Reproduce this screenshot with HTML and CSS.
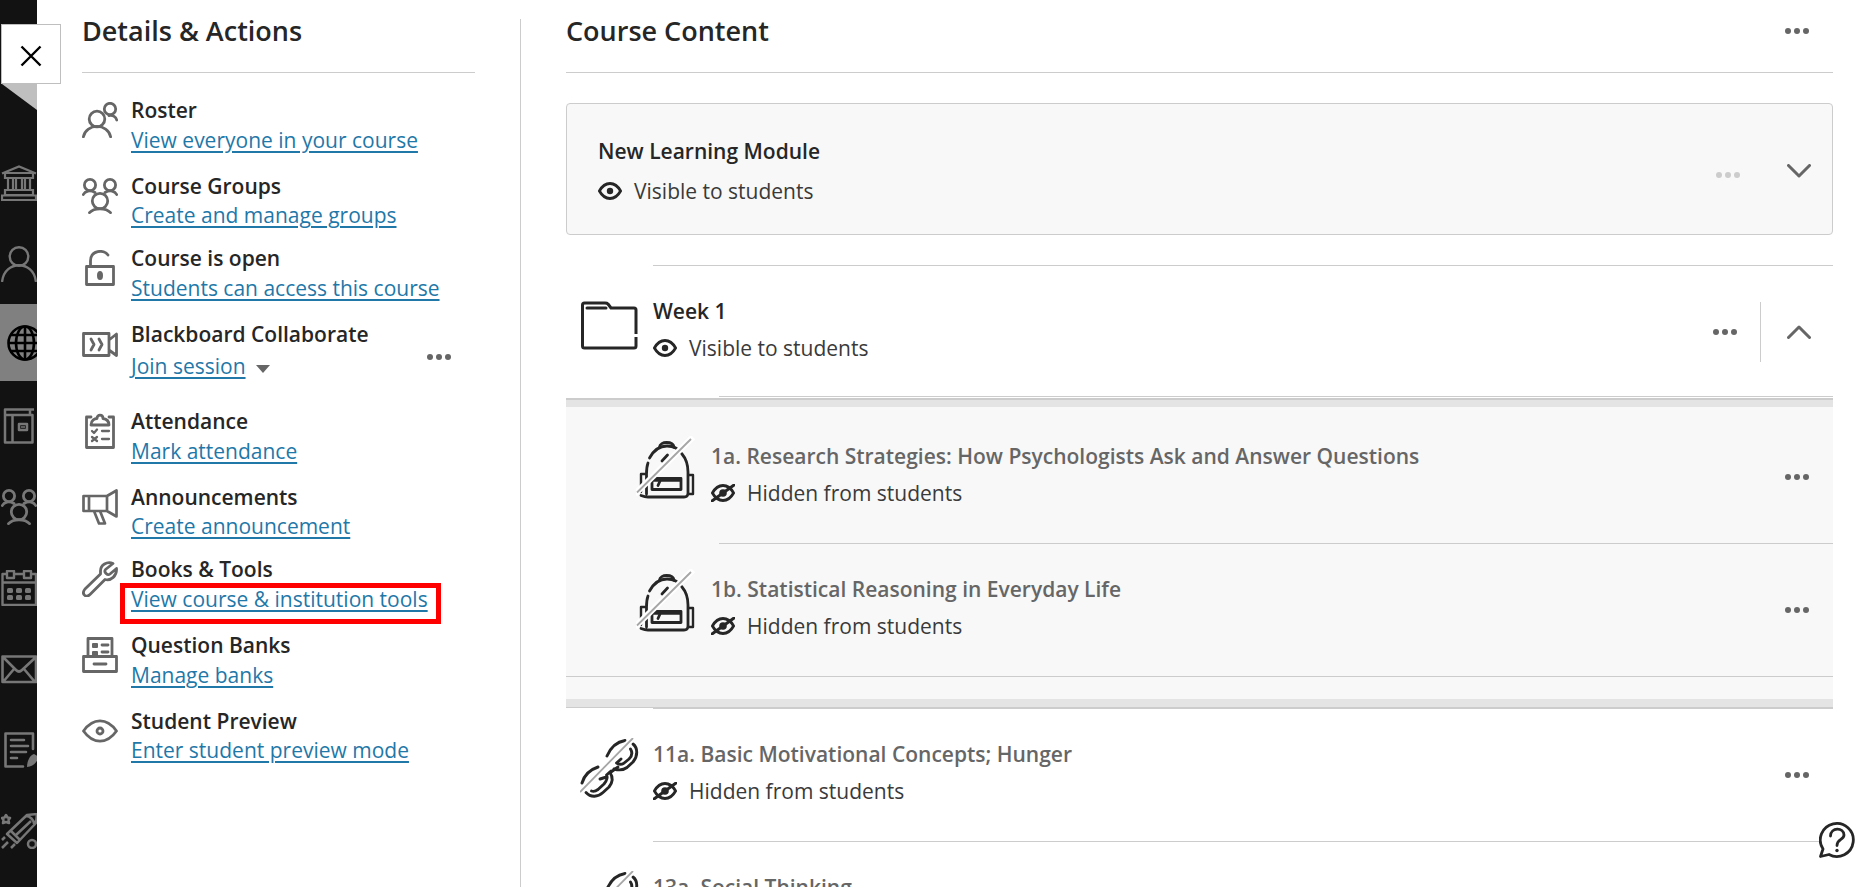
FILE: index.html
```
<!DOCTYPE html>
<html lang="en">
<head>
<meta charset="utf-8">
<title>Course Content</title>
<link rel="stylesheet" href="styles.css">
</head>
<body>
<svg class="sprite" aria-hidden="true">
  <symbol id="dots" viewBox="0 0 24 6"><g fill="currentColor"><circle cx="3" cy="3" r="3"/><circle cx="12" cy="3" r="3"/><circle cx="21" cy="3" r="3"/></g></symbol>
  <symbol id="eye" viewBox="0 0 24 18"><path d="M1.4 9C7-1 17-1 22.600 9C17 19 7 19 1.400 9Z" fill="none" stroke="currentColor" stroke-width="2.8" stroke-linejoin="round"/><circle cx="12" cy="9" r="3.200" fill="currentColor"/></symbol>
  <symbol id="eye-off" viewBox="0 0 24 18"><path d="M1.400 9C7-1 17-1 22.600 9C17 19 7 19 1.400 9Z" fill="none" stroke="currentColor" stroke-width="2.800"/><circle cx="12" cy="9" r="3.800" fill="currentColor"/><path d="M1 17L23 1" stroke="currentColor" stroke-width="3" stroke-linecap="round"/></symbol>
  <symbol id="groups" viewBox="0 0 36 36"><g fill="none" stroke="currentColor" stroke-width="2.800" stroke-linecap="round"><circle cx="8" cy="7" r="5.600"/><circle cx="28" cy="7" r="5.600"/><circle cx="18" cy="23" r="7.700"/><path d="M1.300 16.500C3 13 8 11.500 13 14.500M34.700 16.500C33 13 28 11.500 23 14.500M7.500 34.700C12 29.500 24 29.500 28.500 34.700"/></g></symbol>
  <symbol id="chevron" viewBox="0 0 24 14"><path d="M1.500 1.500L12 12L22.500 1.500" fill="none" stroke="currentColor" stroke-width="3" stroke-linecap="round" stroke-linejoin="round"/></symbol>
  <symbol id="backpack" viewBox="0 0 60 66">
    <g fill="none" stroke="currentColor" stroke-width="2.800" stroke-linejoin="round" stroke-linecap="round">
      <path d="M10.500 58V38Q10.500 31 12 27M13.500 22Q20 10 31 10Q41 10 46 18Q52 25 52 36V57Q52 61 48 61H12Q9 61 5 59.500"/>
      <path d="M23.500 11C24 5 37 5 38 11"/>
      <path d="M9 38H5V56M53 39H57V58H53" stroke-width="2.400"/>
      <path d="M26 25L31.500 19"/>
      <path d="M16 42.500H45V53.500H16Z"/><path d="M17 44H44" stroke-width="3.500"/><path d="M24 45L22 49.500"/>
    </g>
    <path d="M-1 58L57 1" stroke="#fff" stroke-width="6"/><path d="M1 56.500L55 3" stroke="#a6a6a6" stroke-width="1.800"/>
  </symbol>
  <symbol id="chain" viewBox="0 0 60 62">
    <g fill="none" stroke="currentColor" stroke-width="2.900" stroke-linecap="round" stroke-linejoin="round">
      <path d="M27 18C30 11 36 4 45 2.500M2 45C4 38 9 32 18 29"/>
      <path d="M53 6C58 10 58 18 53 24L47 29.500C43 32.500 39 32.500 34 31"/>
      <path d="M50.500 11C53 15 52 18 49 21L43.500 25.500C41 27 39 26.500 36.500 25L41 21"/>
      <path d="M6 54.500C11 60 18 59 23 54.500L29 49C33 44 33 39 30 34.500"/>
      <path d="M11.500 53C14 54 16 53 18 51.500L24 46C27 42.500 28 40 26.500 37L31 33M26.500 39L20 41"/>
      <path d="M31 34L38 29"/>
    </g>
    <path d="M0 54L53 0" stroke="#fff" stroke-width="5.500"/><path d="M0 54L53 0" stroke="#a6a6a6" stroke-width="1.800"/>
  </symbol>
</svg>

<div class="app">
  <nav class="rail" aria-label="Main">
    <a class="rail-item" href="#" aria-label="Institution"><svg viewBox="0 0 36 36"><g fill="none" stroke="currentColor" stroke-width="2.200"><path d="M1 8.500L18 1.500L35 8.500M4 8H32V13H4Z M7 14V25M29 14V25M12 14V25M15 14V25M21 14V25M24 14V25M4 25H32V30H4ZM1 30.500H35V35H1Z"/></g></svg></a>
    <a class="rail-item" href="#" aria-label="Profile"><svg viewBox="0 0 36 36"><g fill="none" stroke="currentColor" stroke-width="2.400" stroke-linecap="round"><circle cx="18" cy="10.500" r="9.300"/><path d="M1.200 35C4 14 32 14 34.800 35"/></g></svg></a>
    <a class="rail-item rail-item--active" href="#" aria-label="Activity"><svg viewBox="0 0 36 36"><g fill="none" stroke="currentColor" stroke-width="2.600"><circle cx="18" cy="18" r="16.500"/><ellipse cx="18" cy="18" rx="9" ry="16.500"/><path d="M18 1V35M1 18H35M4 10H32M4 26H32"/></g></svg></a>
    <a class="rail-item" href="#" aria-label="Courses"><svg viewBox="0 0 36 36"><g fill="none" stroke="currentColor" stroke-width="2.500" stroke-linejoin="round"><path d="M33 1.500H4V34.500H31.500V7H4M29 2V7M11.500 7V34M18 16H26V22H18Z"/><path d="M20 19H24" stroke-width="1.500"/></g></svg></a>
    <a class="rail-item" href="#" aria-label="Organizations"><svg><use href="#groups"/></svg></a>
    <a class="rail-item" href="#" aria-label="Calendar"><svg viewBox="0 0 36 36"><g fill="none" stroke="currentColor" stroke-width="2.400" stroke-linejoin="round"><path d="M6 4H1.500V35H35V4H31M14 4H23M1.500 12.500H35M6 1H13V8H6ZM23 1H30V8H23Z"/></g><g fill="currentColor"><rect x="6" y="18" width="6" height="5" rx="1.500"/><rect x="15" y="18" width="6" height="5" rx="1.500"/><rect x="24" y="18" width="6" height="5" rx="1.500"/><rect x="6" y="25" width="6" height="5" rx="1.500"/><rect x="15" y="25" width="6" height="5" rx="1.500"/><rect x="24" y="25" width="6" height="5" rx="1.500"/></g></svg></a>
    <a class="rail-item" href="#" aria-label="Messages"><svg viewBox="0 0 36 36"><g fill="none" stroke="currentColor" stroke-width="2.600" stroke-linejoin="round"><path d="M1.500 5.500H35V31H1.500ZM2 6L15 19Q18 22 21 19L35 6M2 31L13 18M34 31L23 18"/></g></svg></a>
    <a class="rail-item" href="#" aria-label="Grades"><svg viewBox="0 0 36 36"><g fill="none" stroke="currentColor" stroke-width="2.600" stroke-linecap="round" stroke-linejoin="round"><path d="M22 34.500H4.500V1.500H32V17M10 8H23M10 14H27M10 20H25M10 26H16"/></g><path d="M26 35C26 29 29 23 33 22L38 25C36 30 32 35 26 35Z" fill="currentColor"/></svg></a>
    <a class="rail-item" href="#" aria-label="Tools"><svg viewBox="0 0 36 36"><g fill="none" stroke="currentColor" stroke-width="2.500" stroke-linejoin="round"><path d="M6 21L26 2L36 1L35 10L16 30ZM10 18L19 27M15 22L30 8M25 3C29 3 33 7 33 11M1 35L7 29M10 35L14 31M1 27L4 24"/><circle cx="31" cy="31" r="4"/><path d="M5 2L6.500 4.500L9 5L7.500 7L8 10L5 9L2 10L2.500 7L1 5L3.500 4.500Z"/></g></svg></a>
  </nav>

  <main class="panel">
    <button class="close" type="button" aria-label="Close"><svg viewBox="0 0 22 22"><path d="M1.500 1.500L20.500 20.500M20.500 1.500L1.500 20.500" fill="none" stroke="currentColor" stroke-width="2.400"/></svg></button>

    <aside class="details">
      <h2 class="heading">Details &amp; Actions</h2>
      <ul class="actions">
        <li class="action"><svg class="action-icon" viewBox="0 0 36 36"><g fill="none" stroke="currentColor" stroke-width="2.800" stroke-linecap="round"><circle cx="15" cy="17" r="7.800"/><path d="M1.400 34.800C4 21 26 21 28.600 34.800"/><circle cx="28" cy="7" r="5.700"/><path d="M27 13.500C31 13 34 15 34.700 18"/></g></svg>
          <div><h3>Roster</h3><a href="#">View everyone in your course</a></div></li>
        <li class="action action--compact"><svg class="action-icon"><use href="#groups"/></svg>
          <div><h3>Course Groups</h3><a href="#">Create and manage groups</a></div></li>
        <li class="action"><svg class="action-icon" viewBox="0 0 36 36"><g fill="none" stroke="currentColor" stroke-width="2.800" stroke-linecap="round" stroke-linejoin="round"><path d="M4.500 16.500H31.500V34.500H4.500ZM8.500 16V11C8.500 0 22 -1 26 5"/></g><ellipse cx="18" cy="25.500" rx="3" ry="4.500" fill="currentColor"/></svg>
          <div><h3>Course is open</h3><a href="#">Students can access this course</a></div></li>
        <li class="action action--session"><svg class="action-icon" viewBox="0 0 36 36"><g fill="none" stroke="currentColor" stroke-width="2.800" stroke-linecap="round" stroke-linejoin="round"><path d="M1.500 7.500H27V29.500H1.500ZM27 14L34.500 8V29.500L27 24M9 13L12 18.500L9 24M17 13L20 18.500L17 24"/></g></svg>
          <div><h3>Blackboard Collaborate</h3><a href="#">Join session</a><svg class="caret" viewBox="0 0 14 8"><path d="M0 0H14L7 8Z" fill="currentColor"/></svg></div>
          <button class="more" type="button" aria-label="More options"><svg><use href="#dots"/></svg></button></li>
        <li class="action"><svg class="action-icon" viewBox="0 0 36 36"><g fill="none" stroke="currentColor" stroke-width="2.800" stroke-linecap="round" stroke-linejoin="round"><path d="M9 4H4.500V34.500H31.500V4H27M9 12C9 7 13 5.500 15 5.500C15 1 21 1 21 5.500C24 6 27 8 27 12Z"/><path d="M20 18H27M20 26H27M10 18L12 20L15 16.500M10 24L15 28M15 24L10 28" stroke-width="2.300"/></g></svg>
          <div><h3>Attendance</h3><a href="#">Mark attendance</a></div></li>
        <li class="action action--compact"><svg class="action-icon" viewBox="0 0 36 36"><g fill="none" stroke="currentColor" stroke-width="2.700" stroke-linejoin="round"><path d="M1.500 7H25V22H1.500ZM7 7V22M25 7L34.500 1.500V27.500L25 22M12 22L17 34.500H23L18 22"/></g></svg>
          <div><h3>Announcements</h3><a href="#">Create announcement</a></div></li>
        <li class="action"><svg class="action-icon" viewBox="0 0 36 36"><path d="M31 2.500C25 0 18.500 4 18.500 10V13L3 28C-1 33 4 37.500 8 33.500L23 18.500C29 20 35 15 34.500 7.500L28 13C25.500 15 21.500 11 23.500 8.500Z" fill="none" stroke="currentColor" stroke-width="2.800" stroke-linejoin="round"/></svg>
          <div><h3>Books &amp; Tools</h3><a class="highlight" href="#">View course &amp; institution tools</a></div></li>
        <li class="action"><svg class="action-icon" viewBox="0 0 36 36"><g fill="none" stroke="currentColor" stroke-width="2.800" stroke-linecap="round" stroke-linejoin="round"><path d="M1.500 19.500H34.500V34.500H1.500ZM6 19V1.500H30V19M12 27H24M20 8H26M20 15H26"/></g><g fill="currentColor"><rect x="10" y="6" width="6" height="5" rx="1"/><rect x="10" y="14" width="6" height="5" rx="1"/></g></svg>
          <div><h3>Question Banks</h3><a href="#">Manage banks</a></div></li>
        <li class="action action--compact"><svg class="action-icon" viewBox="0 0 36 36"><path d="M1.500 18C11 4.500 25 4.500 34.500 18C25 31.500 11 31.500 1.500 18Z" fill="none" stroke="currentColor" stroke-width="2.800" stroke-linejoin="round"/><circle cx="18" cy="18" r="3" fill="none" stroke="currentColor" stroke-width="2.800"/></svg>
          <div><h3>Student Preview</h3><a href="#">Enter student preview mode</a></div></li>
      </ul>
    </aside>

    <section class="content">
      <div class="heading content-head"><h2>Course Content</h2><button class="more" type="button" aria-label="More options"><svg><use href="#dots"/></svg></button></div>

      <article class="module">
        <div class="item-text"><h3>New Learning Module</h3><p class="status"><svg><use href="#eye"/></svg>Visible to students</p></div>
        <button class="more more--muted" type="button" aria-label="More options"><svg><use href="#dots"/></svg></button>
        <button class="toggle" type="button" aria-label="Expand"><svg><use href="#chevron"/></svg></button>
      </article>

      <article class="item item--expanded">
        <svg class="item-icon" viewBox="0 0 60 62"><g fill="none" stroke="currentColor" stroke-width="3" stroke-linecap="butt" stroke-linejoin="round"><path d="M56 39V15Q56 13 54 13H31L28 9Q27 8 25 8H4.500Q2.500 8 2.500 10V51Q2.500 53 4.500 53H54Q56 53 56 51V42"/><path d="M7 13H26" stroke-linecap="round"/></g></svg>
        <div class="item-main">
          <div class="item-text"><h3>Week 1</h3><p class="status"><svg><use href="#eye"/></svg>Visible to students</p></div>
          <button class="more" type="button" aria-label="More options"><svg><use href="#dots"/></svg></button>
          <button class="toggle toggle--open" type="button" aria-label="Collapse"><svg><use href="#chevron"/></svg></button>
        </div>
      </article>

      <div class="folder-rule"></div>
      <div class="folder">
        <article class="item item--hidden">
          <svg class="item-icon"><use href="#backpack"/></svg>
          <div class="item-main"><div class="item-text"><h3>1a. Research Strategies: How Psychologists Ask and Answer Questions</h3><p class="status"><svg><use href="#eye-off"/></svg>Hidden from students</p></div>
          <button class="more" type="button" aria-label="More options"><svg><use href="#dots"/></svg></button></div>
        </article>
        <article class="item item--hidden">
          <svg class="item-icon"><use href="#backpack"/></svg>
          <div class="item-main"><div class="item-text"><h3>1b. Statistical Reasoning in Everyday Life</h3><p class="status"><svg><use href="#eye-off"/></svg>Hidden from students</p></div>
          <button class="more" type="button" aria-label="More options"><svg><use href="#dots"/></svg></button></div>
        </article>
        <div class="folder-end"></div>
      </div>

      <article class="item item--hidden">
        <svg class="item-icon"><use href="#chain"/></svg>
        <div class="item-main"><div class="item-text"><h3>11a. Basic Motivational Concepts; Hunger</h3><p class="status"><svg><use href="#eye-off"/></svg>Hidden from students</p></div>
        <button class="more" type="button" aria-label="More options"><svg><use href="#dots"/></svg></button></div>
      </article>
      <article class="item item--hidden">
        <svg class="item-icon"><use href="#chain"/></svg>
        <div class="item-main"><div class="item-text"><h3>13a. Social Thinking</h3><p class="status"><svg><use href="#eye-off"/></svg>Hidden from students</p></div>
        <button class="more" type="button" aria-label="More options"><svg><use href="#dots"/></svg></button></div>
      </article>
    </section>
  </main>
  <button class="help" type="button" aria-label="Help"><svg viewBox="0 0 36 36"><path d="M1.500 34.500L4 27A16.500 16.500 0 1 1 10 32.500Z" fill="#fff" stroke="currentColor" stroke-width="2.800" stroke-linejoin="round"/><path d="M11.500 14C11.500 5 25 5 25 13C25 18 18 17 18 23.500" fill="none" stroke="currentColor" stroke-width="2.800" stroke-linecap="round"/><circle cx="18" cy="28.500" r="1.700" fill="currentColor"/></svg></button>
</div>
</body>
</html>
```
FILE: styles.css
```
* { box-sizing: border-box; }
body { margin: 0; font-family: "Open Sans", "Noto Sans", sans-serif; font-size: 21px; color: #262626; background: #fff; }
h2, h3, p, ul { margin: 0; padding: 0; }
h2 { font-size: 27px; font-weight: 600; line-height: 40px; }
h3 { font-size: 21px; font-weight: 600; line-height: 30px; }
button { padding: 0; border: 0; background: none; color: #666; font: inherit; cursor: pointer; }
svg { display: block; }
.sprite { position: absolute; width: 0; height: 0; }

.app { display: flex; height: 100vh; overflow: hidden; }

.rail { width: 37px; flex: none; padding-top: 142px; background: #121212; overflow: hidden; }
.rail-item { display: flex; align-items: center; height: 77px; margin-bottom: 4px; padding: 4px 0 0 1px; color: #777; }
.rail-item svg { width: 36px; height: 36px; flex: none; }
.rail-item--active { background: #808080; color: #000; padding: 0 0 0 7px; }

.panel { position: relative; flex: 1; min-width: 0; display: flex; background: #fff; }
.close { position: absolute; left: -36px; top: 24px; width: 60px; height: 60px; padding-top: 4px; display: grid; place-items: center; border: 1px solid #bfbfbf; background: #fff; color: #000; }
.close svg { width: 22px; height: 22px; }
.close::after { content: ""; position: absolute; top: 59px; left: 0; width: 35px; height: 26px; background: #bfbfbf; clip-path: polygon(0 0, 100% 0, 100% 100%); }

.details { width: 483px; flex: none; padding: 0 45px; }
.heading { height: 73px; padding-top: 11px; border-bottom: 1px solid #ccc; }
.actions { list-style: none; padding-top: 22px; }
.action { display: flex; gap: 13px; min-height: 76px; }
.action-icon { width: 36px; height: 36px; margin-top: 7px; flex: none; color: #666; }
.action a { display: inline-block; color: #1f78a8; line-height: 30px; text-decoration-thickness: 2px; text-underline-offset: 3px; }
.action--compact { min-height: 72px; }
.action--compact a { line-height: 24px; }
.action--session { min-height: 87px; align-items: flex-start; }
.action--session a { line-height: 34px; }
.action--session .more { margin: 26px 24px 0 auto; }
.caret { display: inline-block; width: 14px; height: 8px; margin-left: 10px; color: #666; vertical-align: 1px; }
.highlight { position: relative; }
.highlight::after { content: ""; position: absolute; inset: -1px -13px -10px -11px; border: 5px solid #f00; }

.content { flex: 1; min-width: 0; margin-top: 19px; padding: 0 32px 0 45px; border-left: 1px solid #ccc; }
.content-head { display: flex; justify-content: space-between; height: 54px; padding: 0 24px 0 0; margin-bottom: 30px; }
.content-head h2 { margin-top: -8px; }
.more { display: grid; place-items: center; height: 24px; }
.more svg { width: 24px; height: 6px; }
.more--muted { color: #ccc; }
.toggle svg { width: 24px; height: 14px; }
.status { display: flex; align-items: center; gap: 12px; line-height: 30px; color: #3a3a3a; }
.status svg { width: 24px; height: 18px; color: #262626; }
.item-text { flex: 1; min-width: 0; }

.module { display: flex; align-items: center; height: 132px; margin-bottom: 30px; padding: 4px 21px 0 31px; border: 1px solid #ccc; border-radius: 4px; background: #f8f8f8; }
.module .status { margin-top: 10px; }
.module .more { margin-top: 8px; }
.module .toggle { margin-left: 47px; }

.item { display: flex; height: 133px; padding-left: 14px; gap: 13px; color: #262626; }
.item--expanded { height: 131px; }
.item-icon { width: 60px; height: 62px; margin-top: 30px; flex: none; }
.item-main { flex: 1; min-width: 0; display: flex; align-items: flex-start; padding: 30px 24px 0 0; border-top: 1px solid #ccc; }
.item-main .status { margin-top: 7px; }
.item-main .more { margin-top: 24px; }
.item-main .toggle { display: grid; place-items: center; height: 60px; margin: 6px -2px 0 23px; padding-left: 26px; border-left: 1px solid #ccc; }
.toggle--open svg { transform: rotate(180deg); }
.item--hidden h3 { color: #666; }

.folder-rule { height: 1px; margin: 0 0 1px 153px; background: #ccc; }
.folder { padding-top: 10px; border-top: 2px solid #ccc; border-bottom: 1px solid #ccc; background: #f8f8f8; box-shadow: inset 0 7px #e4e4e4, inset 0 -8px #e4e4e4; }
.folder .item { padding-left: 70px; gap: 23px; }
.folder .item-icon { height: 66px; margin-top: 26px; }
.folder .item-text { margin-left: -8px; }
.folder .item:first-child .item-main { border-top-color: transparent; }
.folder-end { height: 31px; border-top: 1px solid #ccc; }

.help { position: fixed; right: 10px; bottom: 29px; color: #262626; }
.help svg { width: 36px; height: 36px; }
```
